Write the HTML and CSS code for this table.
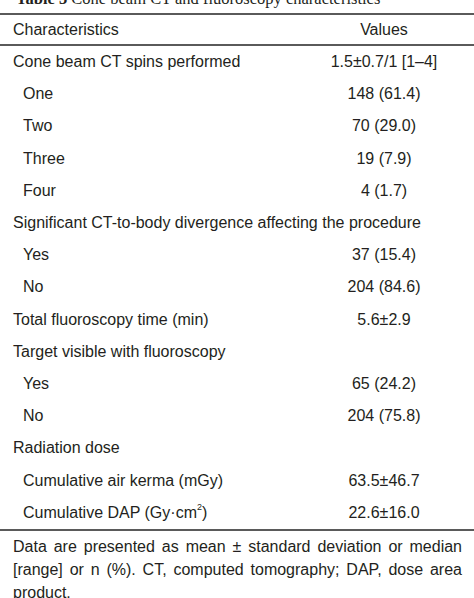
FILE: index.html
```
<!DOCTYPE html>
<html>
<head>
<meta charset="utf-8">
<link rel="stylesheet" href="styles.css">
</head>
<body>
<div class="page">
  <div class="caption"><b>Table 3</b> Cone beam CT and fluoroscopy characteristics</div>
  <div class="table">
    <div class="row head"><div class="c1">Characteristics</div><div class="c2">Values</div></div>
    <div class="body">
      <div class="row"><div class="c1">Cone beam CT spins performed</div><div class="c2">1.5±0.7/1 [1–4]</div></div>
      <div class="row sub"><div class="c1">One</div><div class="c2">148 (61.4)</div></div>
      <div class="row sub"><div class="c1">Two</div><div class="c2">70 (29.0)</div></div>
      <div class="row sub"><div class="c1">Three</div><div class="c2">19 (7.9)</div></div>
      <div class="row sub"><div class="c1">Four</div><div class="c2">4 (1.7)</div></div>
      <div class="row"><div class="c1 wide">Significant CT-to-body divergence affecting the procedure</div><div class="c2"></div></div>
      <div class="row sub"><div class="c1">Yes</div><div class="c2">37 (15.4)</div></div>
      <div class="row sub"><div class="c1">No</div><div class="c2">204 (84.6)</div></div>
      <div class="row"><div class="c1">Total fluoroscopy time (min)</div><div class="c2">5.6±2.9</div></div>
      <div class="row"><div class="c1">Target visible with fluoroscopy</div><div class="c2"></div></div>
      <div class="row sub"><div class="c1">Yes</div><div class="c2">65 (24.2)</div></div>
      <div class="row sub"><div class="c1">No</div><div class="c2">204 (75.8)</div></div>
      <div class="row"><div class="c1">Radiation dose</div><div class="c2"></div></div>
      <div class="row sub"><div class="c1">Cumulative air kerma (mGy)</div><div class="c2">63.5±46.7</div></div>
      <div class="row sub"><div class="c1">Cumulative DAP (Gy·cm<sup>2</sup>)</div><div class="c2">22.6±16.0</div></div>
    </div>
  </div>
  <p class="note">Data are presented as mean ± standard deviation or median [range] or n (%). CT, computed tomography; DAP, dose area product.</p>
</div>
</body>
</html>
```
FILE: styles.css
```
html, body {
  margin: 0;
  padding: 0;
  background: #fff;
  overflow: hidden;
}
.page {
  width: 474px;
  font-family: "Liberation Sans", Arial, sans-serif;
  font-size: 16px;
  color: #231f20;
}
.caption {
  font-family: "Liberation Serif", "Times New Roman", serif;
  font-size: 16.5px;
  line-height: 18px;
  height: 23px;
  margin-top: -10px;
  padding-left: 16px;
  color: #231f20;
  white-space: nowrap;
}
.table {
  border-top: 2px solid #5a5a5a;
  border-bottom: 2px solid #5a5a5a;
}
.row {
  display: grid;
  grid-template-columns: 1fr 180px;
  height: 32.2px;
  align-items: center;
}
.row.head {
  height: 29px;
  border-bottom: 2px solid #5a5a5a;
}
.c1 {
  padding-left: 13px;
  white-space: nowrap;
}
.row.sub .c1 {
  padding-left: 23px;
}
.c2 {
  text-align: center;
  white-space: nowrap;
}
sup {
  font-size: 9px;
  vertical-align: top;
  line-height: 1;
  position: relative;
  top: -1px;
}
.note {
  margin: 0;
  padding: 4px 12px 0 13px;
  line-height: 23px;
  text-align: justify;
}
```
